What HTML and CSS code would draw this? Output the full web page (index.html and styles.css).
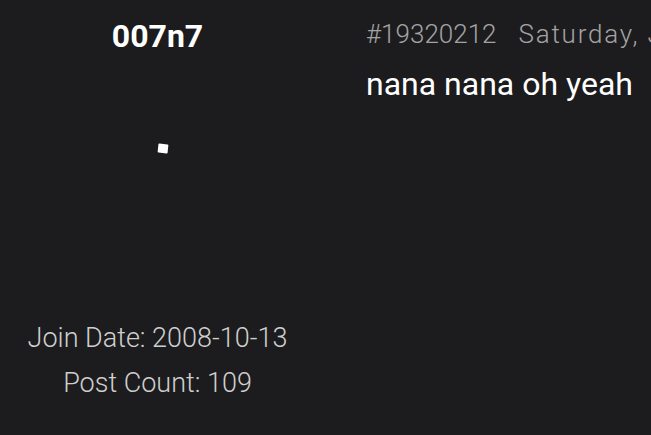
FILE: index.html
```html
<!DOCTYPE html>
<html lang="en">
  <head>
    <meta charset="UTF-8" />
    <meta name="viewport" content="width=device-width, initial-scale=1.0" />
    <title>Post</title>
    <link rel="stylesheet" href="styles.css">
  </head>
  <body>
    <div class="post">
      <div class="author">
        <div class="name">007n7</div>
        <div class="avatar">
          <span class="dot"></span>
        </div>
        <div class="stats">
          <p>Join Date: 2008-10-13</p>
          <p>Post Count: 109</p>
        </div>
      </div>
      <div class="content">
        <div class="meta">
          <span>#19320212</span>
          <span class="date">Saturday, January 12, 2019</span>
        </div>
        <p class="text">nana nana oh yeah</p>
      </div>
    </div>
  </body>
</html>
```

FILE: styles.css
```css
* {
  margin: 0;
  padding: 0;
}
html,
body {
  height: 100%;
}
body {
  background: #1c1c1e;
  color: #fff;
  font-family: Roboto, "Liberation Sans", sans-serif;
  overflow: hidden;
}
.post {
  display: grid;
  grid-template-columns: 315px 1fr;
  column-gap: 51px;
}
.author {
  text-align: center;
}
.name {
  padding-top: 16px;
  font-size: 32px;
  line-height: 40px;
  font-weight: 700;
}
.avatar {
  height: 260px;
  padding-top: 88px;
  box-sizing: border-box;
  display: flex;
  justify-content: center;
}
.dot {
  width: 10px;
  height: 9px;
  margin-left: 11px;
  background: #fff;
  border-radius: 1px;
  transform: rotate(6deg);
}
.stats {
  color: #cfcfcf;
  font-size: 27px;
  font-weight: 300;
  line-height: 45px;
}
.content {
  min-width: 0;
  overflow: hidden;
  white-space: nowrap;
}
.meta {
  display: flex;
  gap: 22px;
  padding-top: 17px;
  color: #a3a3a3;
  font-size: 26px;
  font-weight: 300;
  line-height: 34px;
}
.date {
  letter-spacing: 1.8px;
}
.text {
  margin-top: 13px;
  font-size: 32px;
  line-height: 40px;
}
```
